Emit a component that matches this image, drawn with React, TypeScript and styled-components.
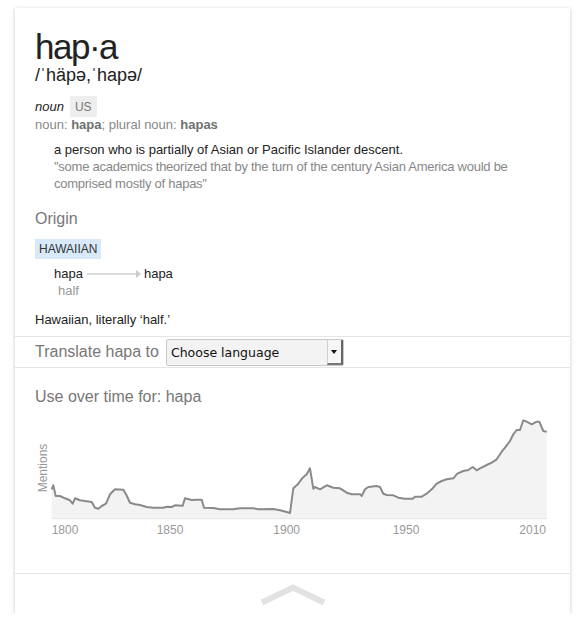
import React from "react";
import styled, { createGlobalStyle } from "styled-components";

const GlobalStyle = createGlobalStyle`
  body {
    margin: 0;
    background: #ffffff;
    font-family: "Liberation Sans", Arial, sans-serif;
  }
`;

const linePoints = [
  "51.7,488.3 53.3,484.3 55.7,495 60,495 65,497.3 70,499.3 72.7,502.7 75,497.3 80,499.3",
  "91.7,501 95,506.7 98.3,507.7 101.7,505 106,502.7 110,493.3 115,488.3 123.3,488.7 126,493.3",
  "130,501.7 135,503.3 140,504 146.7,506 153.3,506.7 163.3,506.7 166.7,505.7 171.7,506 175,504.3",
  "182.7,504.7 185,497.3 191.7,499 196.7,498.7 201.7,498.7 204,506.7 213.3,507 220,508.3",
  "233.3,508.3 240,507.3 253.3,507.3 258.3,508.3 273.3,508 280,509.3 286.7,511 290,512",
  "293.3,487.3 298.3,482.7 302.7,476.7 306.7,473.3 310,467.3 313.3,487.7 315,486 320,488.3",
  "326.7,484.3 333.3,486.7 340,487.3 346.7,491.7 351.7,493.3 360,493.3 361.7,495 365,488.3",
  "368.3,486 376.7,485 380,486 383.3,492.7 386.7,494 393.3,494.3 398.3,496.7 405,497.7",
  "412.7,497.7 415,495.7 421.7,495.7 426.7,492.7 431.7,488.3 436.7,482.7 441.7,480 446.7,478.3",
  "453.3,477.3 457.3,472.7 463.3,470 468.3,469 472.7,466 476.7,469.3 480,467.3 486.7,464",
  "491.7,461.7 496.7,458.3 501.7,450.7 505,446.7 510,440 513.3,433.3 516.7,429 520,429",
  "523.3,419.3 526.7,420.7 531.7,423.3 536.7,420.7 539.3,420.7 543.3,430 546.7,430.7",
].join(" ");

const years = [
  { label: "1800", x: 51.7 },
  { label: "1850", x: 156.7 },
  { label: "1900", x: 273.3 },
  { label: "1950", x: 392.7 },
  { label: "2010", x: 519.3 },
];

const App: React.FunctionComponent = () => {
  return (
    <>
      <GlobalStyle />
      <Card>
        <Header>
          <Word>hap·a</Word>
          <Phonetic>/ˈhäpə,ˈhapə/</Phonetic>
          <PosRow>
            <Pos>noun</Pos>
            <Badge>US</Badge>
          </PosRow>
          <Forms>
            noun: <b>hapa</b>; plural noun: <b>hapas</b>
          </Forms>
          <Definition>
            <DefText>a person who is partially of Asian or Pacific Islander descent.</DefText>
            <Example>
              "some academics theorized that by the turn of the century Asian America would be
              comprised mostly of hapas"
            </Example>
          </Definition>
          <SectionTitle>Origin</SectionTitle>
          <LangTag>HAWAIIAN</LangTag>
          <Etymology>
            <EtymWord>
              <span>hapa</span>
              <Gloss>half</Gloss>
            </EtymWord>
            <Arrow />
            <span>hapa</span>
          </Etymology>
          <OriginNote>Hawaiian, literally ‘half.’</OriginNote>
        </Header>

        <TranslateRow>
          <TranslateLabel>Translate hapa to</TranslateLabel>
          <SelectBox>
            <SelectText>Choose language</SelectText>
            <SelectArrow />
          </SelectBox>
        </TranslateRow>

        <ChartSection>
          <ChartTitle>Use over time for: hapa</ChartTitle>
          <svg width="555" height="139" viewBox="15 406 555 139" style={{ display: "block" }}>
            <polygon points={`51.7,517.7 ${linePoints} 546.7,517.7`} fill="#f3f3f3" />
            <line x1="51.7" y1="517.7" x2="546.7" y2="517.7" stroke="#e4e4e4" strokeWidth="1" />
            <polyline
              points={linePoints}
              fill="none"
              stroke="#8a8a8a"
              strokeWidth="2"
              strokeLinejoin="round"
            />
            <text
              x="46.5"
              y="467"
              transform="rotate(-90 46.5 467)"
              textAnchor="middle"
              fontSize="12"
              fill="#999"
              fontFamily="Liberation Sans, Arial, sans-serif"
            >
              Mentions
            </text>
            {years.map((y) => (
              <text
                key={y.label}
                x={y.x}
                y="532.7"
                fontSize="12"
                fill="#999"
                fontFamily="Liberation Sans, Arial, sans-serif"
              >
                {y.label}
              </text>
            ))}
          </svg>
        </ChartSection>

        <Footer>
          <svg width="66" height="24" viewBox="0 0 66 24">
            <polyline points="2,18.5 33,3.5 64,18.5" fill="none" stroke="#e2e2e2" strokeWidth="6" />
          </svg>
        </Footer>
      </Card>
    </>
  );
};

export default App;

const Card = styled.div`
  width: 555px;
  margin: 8px 0 0 15px;
  background: #ffffff;
  box-shadow: 0 1px 4px rgba(0, 0, 0, 0.22);
`;

const Header = styled.div`
  padding: 21px 20px 8px;
  color: #222;
`;

const Word = styled.div`
  font-size: 35px;
  line-height: 36px;
  letter-spacing: -1.5px;
  color: #222;
`;

const Phonetic = styled.div`
  font-size: 18px;
  line-height: 20px;
  color: #222;
`;

const PosRow = styled.div`
  display: flex;
  align-items: center;
  gap: 6px;
  margin-top: 11px;
  height: 21px;
`;

const Pos = styled.span`
  font-size: 13px;
  font-style: italic;
  color: #222;
`;

const Badge = styled.span`
  display: inline-flex;
  align-items: center;
  height: 21px;
  padding: 0 5px;
  background: #eeeeee;
  color: #777;
  font-size: 12px;
`;

const Forms = styled.div`
  font-size: 13px;
  line-height: 15px;
  color: #878787;

  b {
    color: #6f6f6f;
  }
`;

const Definition = styled.div`
  margin: 9px 0 0 19px;
  font-size: 13px;
  line-height: 17px;
`;

const DefText = styled.div`
  color: #222;
`;

const Example = styled.div`
  color: #878787;
  letter-spacing: -0.25px;
`;

const SectionTitle = styled.div`
  margin-top: 17px;
  font-size: 16px;
  line-height: 20px;
  color: #777;
`;

const LangTag = styled.div`
  display: inline-flex;
  align-items: center;
  height: 20px;
  margin-top: 10px;
  padding: 0 4px;
  background: #d8eaf9;
  color: #333;
  font-size: 12px;
`;

const Etymology = styled.div`
  display: flex;
  align-items: flex-start;
  margin: 6px 0 0 19px;
  font-size: 13px;
  line-height: 17px;
  color: #222;
`;

const EtymWord = styled.div`
  display: flex;
  flex-direction: column;
  align-items: center;
`;

const Gloss = styled.span`
  color: #999;
`;

const Arrow = styled.div`
  position: relative;
  width: 50px;
  height: 2px;
  margin: 8px 7px 0 4px;
  background: #dddddd;

  &::after {
    content: "";
    position: absolute;
    right: -4px;
    top: -3px;
    border-left: 5px solid #cccccc;
    border-top: 4px solid transparent;
    border-bottom: 4px solid transparent;
  }
`;

const OriginNote = styled.div`
  margin-top: 12px;
  font-size: 13px;
  line-height: 17px;
  color: #222;
`;

const TranslateRow = styled.div`
  display: flex;
  align-items: center;
  gap: 7px;
  height: 30px;
  padding: 0 20px;
  border-top: 1px solid #e5e5e5;
  border-bottom: 1px solid #e5e5e5;
`;

const TranslateLabel = styled.span`
  font-size: 16px;
  color: #777;
`;

const SelectBox = styled.div`
  display: flex;
  align-items: stretch;
  width: 178px;
  height: 27px;
  box-sizing: border-box;
  border: 1px solid #c9c9c9;
  border-radius: 2px;
  background: #f3f3f3;
`;

const SelectText = styled.span`
  flex: 1;
  display: flex;
  align-items: center;
  padding-left: 4px;
  font-family: "DejaVu Sans", sans-serif;
  font-size: 12.5px;
  color: #111;
`;

const SelectArrow = styled.span`
  position: relative;
  width: 13px;
  border-left: 1px solid #d0d0d0;
  border-right: 2px solid #666;
  border-bottom: 2px solid #777;
  background: #f6f6f6;

  &::after {
    content: "";
    position: absolute;
    left: 3px;
    top: 10px;
    border-top: 4px solid #111;
    border-left: 3px solid transparent;
    border-right: 3px solid transparent;
  }
`;

const ChartSection = styled.div`
  height: 205px;
  border-bottom: 1px solid #e5e5e5;
`;

const ChartTitle = styled.div`
  padding: 19px 20px 0;
  font-size: 16px;
  line-height: 20px;
  color: #777;
`;

const Footer = styled.div`
  display: flex;
  justify-content: center;
  align-items: flex-start;
  height: 40px;
  padding-top: 10px;
  box-sizing: border-box;
`;
